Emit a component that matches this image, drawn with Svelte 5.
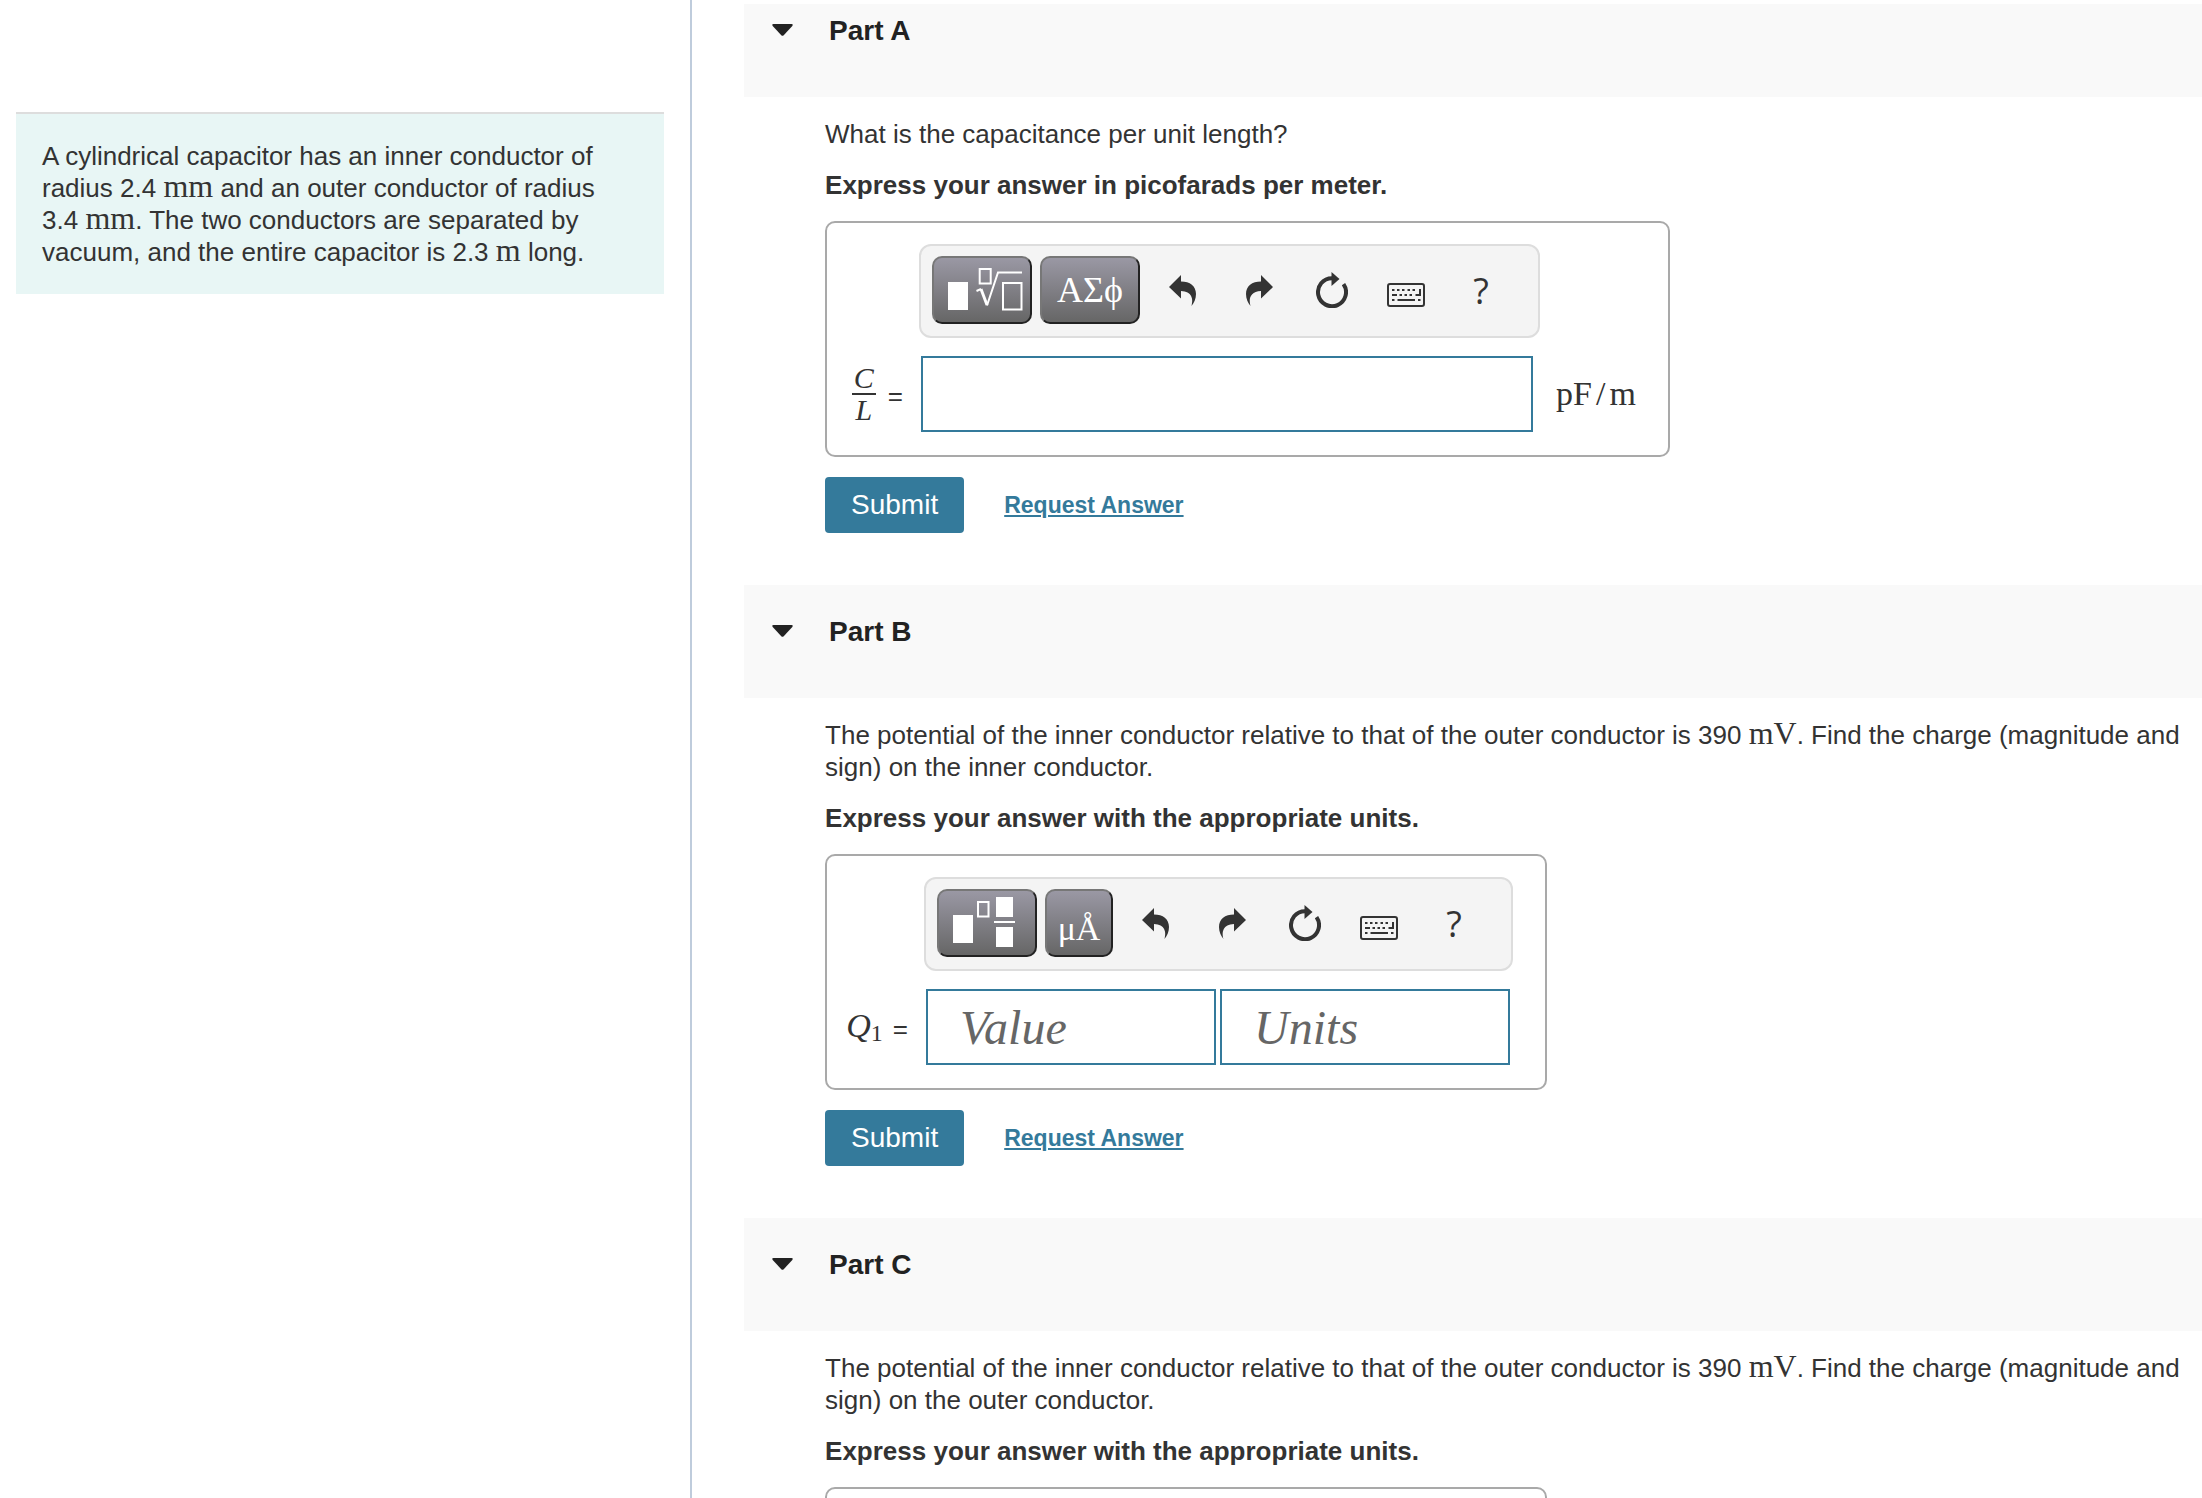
<script>
  // The parts of the problem, in page order
  let parts = $state([
    {
      id: 'a',
      title: 'Part A',
      kind: 'expression',
      instruction: 'Express your answer in picofarads per meter.',
      open: true,
      value: ''
    },
    {
      id: 'b',
      title: 'Part B',
      kind: 'quantity',
      conductor: 'inner',
      symbol: 'Q',
      index: '1',
      instruction: 'Express your answer with the appropriate units.',
      open: true,
      value: '',
      units: ''
    },
    {
      id: 'c',
      title: 'Part C',
      kind: 'quantity',
      conductor: 'outer',
      symbol: 'Q',
      index: '2',
      instruction: 'Express your answer with the appropriate units.',
      open: true,
      value: '',
      units: ''
    }
  ]);

  function clearAnswer(part) {
    part.value = '';
    if (part.kind === 'quantity') part.units = '';
  }
</script>

{#snippet tools(part)}
  <button type="button" class="tool undo" aria-label="Undo">
    <svg width="27" height="31" viewBox="0 0 27 31">
      <path d="M0 12 12 0V6.500C21 6.500 27 11 27 19C27 24 25 28 22.500 31C24.500 24 23 16.500 12 16V23.500Z" />
    </svg>
  </button>
  <button type="button" class="tool redo" aria-label="Redo">
    <svg width="27" height="31" viewBox="0 0 27 31">
      <path d="M27 12 15 0V6.500C6 6.500 0 11 0 19C0 24 2 28 4.500 31C2.500 24 4 16.500 15 16V23.500Z" />
    </svg>
  </button>
  <button type="button" class="tool reset" aria-label="Reset" onclick={() => clearAnswer(part)}>
    <svg width="32" height="36" viewBox="0 0 32 36">
      <path d="M16 6.200A14 14 0 1 0 27.500 12.200" fill="none" stroke="#333" stroke-width="4" />
      <path d="M15.500 0 23.500 7 15.500 14Z" />
    </svg>
  </button>
  <button type="button" class="tool keyboard" aria-label="Keyboard shortcuts">
    <svg width="38" height="24" viewBox="0 0 38 24">
      <rect x="1" y="1" width="36" height="22" rx="2" fill="none" stroke="#333" stroke-width="2" />
      <path d="M5 6h2.500v2H5zM10 6h2.500v2H10zM15 6h2.500v2H15zM20.500 6H23v2h-2.500zM25.500 6H28v2h-2.500z" />
      <path d="M5 11h5v2H5zM12.500 11H15v2h-2.500zM17.500 11H20v2h-2.500zM22.500 11H25v2h-2.500zM32 6h2v7h-5.500v-2H32z" />
      <path d="M5 16h2.500v2H5zM10.500 16H28v2H10.500zM31 16h2.500v2H31z" />
    </svg>
  </button>
  <button type="button" class="tool help" aria-label="Help">?</button>
{/snippet}

<div class="page">
  <aside class="problem">
    <p class="statement">
      A cylindrical capacitor has an inner conductor of radius 2.4&nbsp;<span class="unit">mm</span> and an outer
      conductor of radius 3.4&nbsp;<span class="unit">mm</span>. The two conductors are separated by vacuum, and the
      entire capacitor is 2.3&nbsp;<span class="unit">m</span> long.
    </p>
  </aside>

  <main class="parts">
    {#each parts as part (part.id)}
      <section class="part">
        <header class="part-header">
          <button
            type="button"
            class="caret"
            aria-label="Toggle {part.title}"
            aria-expanded={part.open}
            onclick={() => (part.open = !part.open)}
          >
            <svg width="21" height="12" viewBox="0 0 21 12">
              <path d="M1.500 0H19.500Q21.500 0 20.300 2L11.700 11.200Q10.500 12.300 9.300 11.200L.7 2Q-.5 0 1.500 0Z" fill="#222" />
            </svg>
          </button>
          <h2>{part.title}</h2>
        </header>

        {#if part.open}
          <div class="part-body">
            {#if part.kind === 'expression'}
              <p>What is the capacitance per unit length?</p>
            {:else}
              <p>
                The potential of the inner conductor relative to that of the outer conductor is
                390&nbsp;<span class="unit">mV</span>. Find the charge (magnitude and sign) on the {part.conductor} conductor.
              </p>
            {/if}
            <p class="instruction">{part.instruction}</p>

            <form onsubmit={(e) => e.preventDefault()}>
              {#if part.kind === 'expression'}
                <div class="answer expression">
                  <div class="toolbar">
                    <button type="button" class="palette" aria-label="Templates">
                      <svg width="96" height="64" viewBox="2 2 96 64" fill="none" stroke="#fff">
                        <rect x="16" y="26" width="20" height="28" fill="#fff" stroke="none" />
                        <rect x="47.700" y="13" width="11" height="14.500" stroke-width="2" />
                        <path d="M44.500 35 49 33" stroke-width="2" />
                        <path d="M49 33 55 49" stroke-width="3" />
                        <path d="M55 49.500 66 16.500H90" stroke-width="2" />
                        <rect x="71" y="27" width="18.500" height="26.500" stroke-width="2" />
                      </svg>
                    </button>
                    <button type="button" class="palette" aria-label="Symbols">ΑΣϕ</button>
                    {@render tools(part)}
                  </div>
                  <label class="name" for="answer-{part.id}">
                    <span class="fraction"><i>C</i><i>L</i></span>
                    <span class="equals">=</span>
                  </label>
                  <div class="fields">
                    <input id="answer-{part.id}" type="text" autocomplete="off" bind:value={part.value} />
                  </div>
                  <span class="suffix">pF<span class="slash">/</span>m</span>
                </div>
              {:else}
                <div class="answer quantity">
                  <div class="toolbar">
                    <button type="button" class="palette" aria-label="Templates">
                      <svg width="96" height="64" viewBox="2 2 96 64" fill="#fff">
                        <rect x="16" y="26" width="20" height="28" />
                        <rect x="41" y="13" width="10.500" height="14.500" fill="none" stroke="#fff" stroke-width="2" />
                        <rect x="59" y="8" width="17" height="20" />
                        <rect x="57" y="32" width="21" height="2" />
                        <rect x="59" y="38" width="17" height="20" />
                      </svg>
                    </button>
                    <button type="button" class="palette units" aria-label="Units">μÅ</button>
                    {@render tools(part)}
                  </div>
                  <label class="name" for="answer-{part.id}">
                    <span class="symbol"><i>{part.symbol}</i><small>{part.index}</small></span>
                    <span class="equals">=</span>
                  </label>
                  <div class="fields">
                    <input id="answer-{part.id}" type="text" placeholder="Value" autocomplete="off" bind:value={part.value} />
                    <input type="text" placeholder="Units" aria-label="Units" autocomplete="off" bind:value={part.units} />
                  </div>
                </div>
              {/if}

              <div class="actions">
                <button type="submit" class="submit">Submit</button>
                <a class="request" href="#answer-{part.id}">Request Answer</a>
              </div>
            </form>
          </div>
        {/if}
      </section>
    {/each}
  </main>
</div>

<style>
  :global(body) {
    margin: 0;
    background: #fff;
  }

  .page {
    display: grid;
    grid-template-columns: 11fr 24fr;
    height: 100vh;
    overflow: hidden;
    color: #333;
    font-family: 'Liberation Sans', Arial, sans-serif;
    font-size: 26px;
    line-height: 32px;
  }

  p,
  h2 {
    margin: 0;
  }

  button {
    padding: 0;
    border: 0;
    background: none;
    font-family: inherit;
    cursor: pointer;
  }

  svg {
    display: block;
  }

  .unit {
    font-family: 'Liberation Serif', 'Times New Roman', serif;
    font-size: 32px;
    line-height: 0;
  }

  /* Problem statement */
  .problem {
    padding: 112px 26px 0 16px;
    border-right: 2px solid #bfccdc;
  }

  .statement {
    padding: 26px;
    border-top: 2px solid #ddd;
    background: #e8f6f5;
  }

  /* Parts */
  .parts {
    min-width: 0;
    padding: 4px 0 0 52px;
    overflow-y: auto;
    scrollbar-width: none;
  }

  .part-header {
    display: flex;
    align-items: center;
    height: 36px;
    padding: 28px 28px 49px;
    background: #f9f9f9;
  }

  .part:first-child .part-header {
    padding-top: 8px;
  }

  .caret {
    width: 57px;
  }

  h2 {
    padding-top: 2px;
    color: #222;
    font-size: 28px;
    line-height: 36px;
  }

  .part-body {
    padding: 21px 0 52px 81px;
  }

  .instruction {
    margin: 19px 0 20px;
    font-weight: bold;
  }

  /* Answer box */
  .answer {
    display: grid;
    align-items: center;
    row-gap: 18px;
    box-sizing: border-box;
    width: fit-content;
    height: 236px;
    padding: 21px 32px 23px 0;
    border: 2px solid #a9a9a9;
    border-radius: 10px;
  }

  .expression {
    grid-template-columns: 92px auto auto;
  }

  .quantity {
    grid-template-columns: 97px auto;
  }

  .toolbar {
    grid-area: 1 / 2;
    display: flex;
    align-items: center;
    box-sizing: border-box;
    height: 94px;
    padding: 0 37px 2px 11px;
    border: 2px solid #ddd;
    border-radius: 12px;
    background: #f4f4f4;
  }

  .palette {
    box-sizing: border-box;
    width: 100px;
    height: 68px;
    margin-right: 8px;
    border: 2px solid;
    border-color: #777 #222 #222 #777;
    border-radius: 10px;
    background: linear-gradient(#9a98a4, #666);
    color: #fff;
    font-family: 'Liberation Serif', 'Times New Roman', serif;
    font-size: 36px;
  }

  .palette.units {
    width: 68px;
    padding-top: 12px;
    font-size: 34px;
  }

  .tool {
    display: flex;
    align-items: center;
    justify-content: center;
    height: 48px;
    color: #333;
  }

  .tool svg {
    fill: currentColor;
  }

  .undo {
    margin-left: 21px;
  }

  .redo {
    margin-left: 50px;
  }

  .reset {
    margin-left: 43px;
  }

  .keyboard {
    margin-left: 39px;
    padding-top: 10px;
  }

  .help {
    width: 40px;
    margin-left: 36px;
    font-family: 'Open Sans', sans-serif;
    font-size: 36px;
  }

  .name {
    grid-area: 2 / 1;
    display: flex;
    align-items: center;
    justify-content: flex-end;
    padding-right: 16px;
    font-family: 'Liberation Serif', 'Times New Roman', serif;
  }

  .fraction {
    display: flex;
    flex-direction: column;
    width: 24px;
    margin-right: 12px;
    font-size: 30px;
    line-height: 30px;
    text-align: center;
  }

  .fraction i:first-child {
    border-bottom: 2px solid #333;
  }

  .symbol {
    margin-right: 10px;
    font-size: 34px;
  }

  .symbol small {
    position: relative;
    top: 4px;
    font-size: 24px;
  }

  .equals {
    padding-top: 4px;
    font-family: 'Liberation Sans', Arial, sans-serif;
    font-size: 26px;
  }

  .fields {
    grid-area: 2 / 2;
    display: flex;
    gap: 4px;
    margin-left: 2px;
  }

  .fields input {
    box-sizing: border-box;
    width: 290px;
    height: 76px;
    padding: 0 32px;
    border: 2px solid #347a9b;
    border-radius: 0;
    color: #333;
    font-family: 'Liberation Serif', 'Times New Roman', serif;
    font-size: 48px;
  }

  .expression input {
    width: 612px;
  }

  .fields input::placeholder {
    color: #666;
    font-style: italic;
    opacity: 1;
  }

  .suffix {
    grid-area: 2 / 3;
    margin-left: 16px;
    font-family: 'Liberation Serif', 'Times New Roman', serif;
    font-size: 34px;
  }

  .slash {
    padding: 0 4px;
  }

  .actions {
    display: flex;
    align-items: center;
    gap: 40px;
    margin-top: 20px;
  }

  .submit {
    height: 56px;
    padding: 0 26px;
    border-radius: 4px;
    background: #347a9b;
    color: #fff;
    font-size: 28px;
  }

  .request {
    color: #347a9b;
    font-size: 23px;
    font-weight: bold;
  }
</style>
